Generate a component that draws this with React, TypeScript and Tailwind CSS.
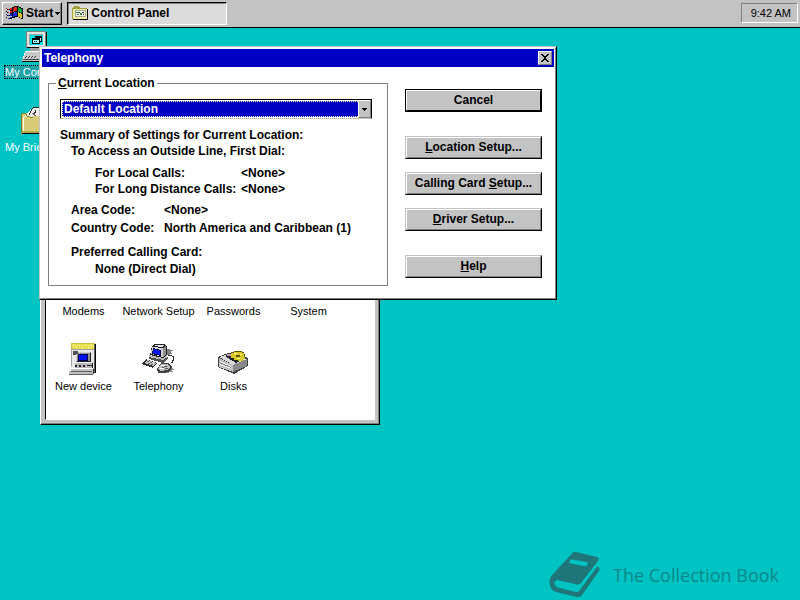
import type { ReactNode } from 'react';

const FONT = "font-['Liberation_Sans',Arial,sans-serif]";

function WindowsLogo() {
  return (
    <svg width="18" height="16" viewBox="0 0 18 16" shapeRendering="crispEdges" aria-hidden="true">
      <path d="M6 2h2v-1h5v1h2v1h2v11h-2v-1h-2v-1h-4v1h-3z" fill="#000" />
      <path d="M7 3h1v-1h3v4h-3v1h-1z" fill="#e02020" />
      <path d="M12 2h1v1h2v1h1v4h-2v-1h-2z" fill="#00a040" />
      <path d="M7 8h1v-1h3v4h-3v1h-1z" fill="#1030e0" />
      <path d="M12 7h1v1h2v1h1v4h-2v-1h-2z" fill="#e0c820" />
      <path d="M4 3h2v2h-2zM2 4h1v1h-1zM0 3h1v1h-1zM4 6h2v2h-2zM2 7h1v1h-1z" fill="#e02020" />
      <path d="M4 9h2v2h-2zM2 10h1v1h-1zM0 9h1v1h-1zM4 12h2v1h-2zM2 13h1v1h-1z" fill="#1030e0" />
      <path d="M4 5h2v1h-2zM3 4h1v1h-1zM1 4h1v1h-1zM4 8h2v1h-2zM1 7h1v1h-1zM3 10h1v1h-1zM1 10h1v1h-1zM4 13h2v1h-2zM3 13h1v1h-1zM0 6h1v1h-1zM0 12h1v1h-1z" fill="#000" />
    </svg>
  );
}

function ControlPanelIcon() {
  return (
    <svg width="18" height="16" viewBox="0 0 18 16" shapeRendering="crispEdges" aria-hidden="true">
      <path d="M1 3h1v-2h6v2h8v12h-14v-1h-1z" fill="#f0f0a8" />
      <path d="M1 3h1v-1h1v-1h5v1h1v1h7v1h-15zM1 3h1v11h-1z" fill="#a0a040" />
      <path d="M16 4h1v11h-15v-1h14z" fill="#000" />
      <path d="M4 5h11v7h-11z" fill="#a0a890" />
      <path d="M5 6h9v5h-9z" fill="#f0f0e8" />
      <path d="M5 7h3v1h-3zM6 9h2v1h-2zM9 8h2v2h-2z" fill="#308040" />
      <path d="M8 7h1v1h-1zM11 7h2v1h-2zM12 9h1v1h-1z" fill="#303030" />
    </svg>
  );
}

function ComputerIcon() {
  return (
    <svg width="32" height="32" viewBox="0 0 32 32" shapeRendering="crispEdges" aria-hidden="true">
      <path d="M9 0h19v1h1v15h-1v1h-20v-16h1z" fill="#808080" />
      <path d="M9 1h18v15h-18z" fill="#e4e4e4" />
      <path d="M28 1h1v15h-1zM9 16h20v1h-20z" fill="#000" />
      <path d="M11 3h14v11h-14z" fill="#00e0e4" />
      <path d="M11 3h14v1h-14zM11 3h1v11h-1z" fill="#a0a0a0" />
      <path d="M17 5h7v6h-7z" fill="#000" />
      <path d="M18 7h5v3h-5z" fill="#a0f8f8" />
      <path d="M14 7h8v6h-8z" fill="#000" />
      <path d="M15 9h6v3h-6z" fill="#a0f8f8" />
      <path d="M16 10h1v1h-1zM18 10h1v1h-1z" fill="#000" />
      <path d="M12 17h14v3h-14z" fill="#a0a0a0" />
      <path d="M7 20h22v4h2v7h-27v-3h1v-3h1v-3h1z" fill="#c8c8c8" />
      <path d="M7 20h22v1h-22zM6 22h1v2h-1zM5 25h1v3h-1z" fill="#f8f8f8" />
      <path d="M8 25h1v1h-1zM7 26h1v1h-1zM11 25h1v1h-1zM10 26h1v1h-1zM14 25h1v1h-1zM13 26h1v1h-1zM17 25h1v1h-1zM16 26h1v1h-1zM5 28h18v1h-18z" fill="#404040" />
      <path d="M4 30h27v1h-27zM29 21h1v9h-1z" fill="#000" />
    </svg>
  );
}

function BriefcaseIcon() {
  return (
    <svg width="32" height="32" viewBox="0 0 32 32" shapeRendering="crispEdges" aria-hidden="true">
      <path d="M9 8l5-6h9l4 5v5h-18z" fill="#f0f0f0" />
      <path d="M15 1h7v1h-7zM14 2h1v1h-1zM13 3h1v2h-1zM12 5h1v2h-1zM11 7h1v2h-1zM17 4h1v3h-1zM16 6h1v2h-1z" fill="#303020" />
      <path d="M3 8h2v-1h4v3h3v2h3v-2h13v18h-25z" fill="#d8cc78" />
      <path d="M3 8h1v19h-1zM4 7h4v1h-4zM8 8h1v2h-1zM9 10h3v1h-3zM12 11h3v1h-3z" fill="#808028" />
      <path d="M5 11h1v14h-1zM6 10h2v1h-2z" fill="#fffff0" />
      <path d="M14 7h2v1h-2zM15 8h2v1h-2zM16 9h2v1h-2z" fill="#707070" />
      <path d="M4 25h24v2h-24z" fill="#b0a850" />
      <path d="M4 27h25v1h-25zM28 10h1v18h-1z" fill="#000" />
    </svg>
  );
}

function NewDeviceIcon() {
  return (
    <svg width="32" height="32" viewBox="0 0 32 32" shapeRendering="crispEdges" aria-hidden="true">
      <path d="M3 0h24v30h-24z" fill="#e8e8e8" />
      <path d="M3 0h24v6h-24z" fill="#e8e050" />
      <path d="M3 0h24v1h-24zM3 0h1v6h-1z" fill="#c8c040" />
      <path d="M5 2h1v1h-1zM8 4h1v1h-1zM11 2h1v1h-1zM14 4h1v1h-1zM17 2h1v1h-1zM20 4h1v1h-1zM23 2h1v1h-1z" fill="#fff" />
      <path d="M3 6h24v1h-24zM3 7h1v16h-1z" fill="#a0a0a0" />
      <path d="M27 1h1v29h-1z" fill="#000" />
      <path d="M26 1h1v29h-1z" fill="#606060" />
      <path d="M5 8h5v4h-5z" fill="#505050" />
      <path d="M8 9h15v10h-15z" fill="#909090" />
      <path d="M8 9h14v1h-14zM8 9h1v9h-1z" fill="#d0d0d0" />
      <path d="M5 8h5v3h-5z" fill="#505050" />
      <path d="M10 11h10v7h-10z" fill="#000050" />
      <path d="M11 12h8v5h-8z" fill="#0010f0" />
      <path d="M22 10h1v9h-1zM9 18h14v1h-14z" fill="#202020" />
      <path d="M7 19h18v6h-18z" fill="#b8b8b8" />
      <path d="M7 19h17v1h-17z" fill="#f4f4f4" />
      <path d="M7 22h2v2h-2zM11 22h2v2h-2zM15 22h2v2h-2zM19 22h5v1h-5zM24 20h1v5h-1z" fill="#202020" />
      <path d="M3 25h23l-1 6h-24v-3h1v-2h1z" fill="#c0c0c0" />
      <path d="M3 25h22v1h-22zM2 26h1v2h-1z" fill="#fff" />
      <path d="M3 28h21v1h-21zM1 31h24v1h-24z" fill="#606060" />
      <path d="M25 26h1v5h-1z" fill="#303030" />
    </svg>
  );
}

function TelephonyIcon() {
  return (
    <svg width="34" height="32" viewBox="0 0 34 32" shapeRendering="crispEdges" aria-hidden="true">
      <path d="M24 6l8 1-4 2 2 2-7 2z" fill="#808080" />
      <path d="M10 3l3-2h9l3 2v10l-4 3-13-4z" fill="#202020" />
      <path d="M11 3l3-1h8l-2 2z" fill="#e0e0e0" />
      <path d="M10 4l11 1v9l-12-3z" fill="#d0d0d0" />
      <path d="M21 5l3-2v9l-3 2z" fill="#909090" />
      <path d="M11 5l8 2v6l-9-2z" fill="#000050" />
      <path d="M12 6l6 2v4l-7-2z" fill="#0018f0" />
      <path d="M7 12l14 3 4-3 1 3-5 4-14-4z" fill="#b8b8b8" />
      <path d="M7 14l14 3 5-3v2l-5 4-14-4z" fill="#505050" />
      <path d="M4 16l11 4-4 5-11-4z" fill="#303030" />
      <path d="M5 17l9 3-3 3-9-3z" fill="#c8c8c8" />
      <path d="M5 18h2v1h-2zM8 19h2v1h-2zM6 20h2v1h-2zM9 21h2v1h-2z" fill="#606060" />
      <path d="M26 12h4v1h2v5h-1v2h-2v-1h1v-2h1v-3h-1v-1h-4z" fill="#303030" />
      <path d="M24 24l9 2-3 1 1 2-8 1z" fill="#909090" />
      <path d="M19 20h8l3 4-2 4-5 2h-7l-1-4z" fill="#404040" />
      <path d="M19 21h7l2 3-3 3-7 1-2-2z" fill="#c0c0c0" />
      <path d="M19 22h4v1h-4zM18 25h4v1h-4z" fill="#fff" />
      <path d="M22 23h3v1h-3zM20 24h2v1h-2zM23 25h3v1h-3z" fill="#505050" />
    </svg>
  );
}

function DisksIcon() {
  return (
    <svg width="32" height="32" viewBox="0 0 32 32" shapeRendering="crispEdges" aria-hidden="true">
      <path d="M0 14l10-4h10l10 5v8l-14 8-16-7z" fill="#404040" />
      <path d="M1 14l9-3 19 5-14 6z" fill="#d8d8d8" />
      <path d="M1 15l14 7v7l-14-5z" fill="#c0c0c0" />
      <path d="M15 22l14-6v7l-14 6z" fill="#888888" />
      <path d="M2 18l11 5v1l-11-5zM2 21l11 4v1l-11-4z" fill="#f4f4f4" />
      <path d="M2 19l11 5v1l-11-5z" fill="#808080" />
      <path d="M7 13l6-3 12 7-7 3z" fill="#202020" />
      <path d="M13 10h3v-1h8v1h2v2h1v4h-2v2h-5v-1h-4v-2h-3z" fill="#d8c828" />
      <path d="M16 8h8v1h-8zM24 9h2v1h-2zM26 11h1v3h-1zM13 9h3v1h-3zM18 12h4v2h-4z" fill="#605808" />
      <path d="M16 10h3v1h-3zM22 11h2v1h-2zM19 15h3v1h-3z" fill="#fff870" />
      <path d="M9 11h4v2h-4z" fill="#c8a0b8" />
    </svg>
  );
}

function BookIcon() {
  return (
    <svg width="52" height="50" viewBox="0 0 52 50" aria-hidden="true">
      <path
        d="M24 2.500Q25 1.500 27 2L48 7Q51 8 49 11L32 33Q30.500 35 28 34.500L8 30Q5 31 5.500 34Q6 36.500 9 37.500L27 42Q29 42.500 30.500 40.500L47 18Q48 16 50 17.500Q51 19 50 21L33 45Q31 47.500 28 47L7 42Q1 40 .5 33Q0 28 4 24Z"
        fill="#1f7678"
      />
      <path d="M23.500 9.500L37 12Q39.500 12.500 38.500 14.500Q37.500 16.500 35 16L22 13.500Q19.500 13 20.500 11Q21.500 9 23.500 9.500Z" fill="#00c4c4" />
    </svg>
  );
}

function PushButton({ children, isDefault = false }: { children: ReactNode; isDefault?: boolean }) {
  return (
    <button
      className={`h-[23px] w-full border bg-[#c3c3c3] text-xs font-bold ${
        isDefault ? 'border-black' : 'border-t-[#c3c3c3] border-l-[#c3c3c3] border-r-black border-b-black'
      }`}
    >
      <span
        className={`flex h-full items-center justify-center border-t border-l border-white pb-[2px] ${
          isDefault ? 'border-r border-b border-r-black border-b-black' : 'border-r border-b border-r-[#808080] border-b-[#808080]'
        }`}
      >
        <span>{children}</span>
      </span>
    </button>
  );
}

function PanelItem({ label, icon }: { label: string; icon?: ReactNode }) {
  return (
    <a href="#" className="flex h-[75px] w-[75px] flex-col items-center">
      <span className="flex h-9 items-start">{icon}</span>
      <span className="text-[11px] leading-[14px] whitespace-nowrap">{label}</span>
    </a>
  );
}

function DesktopItem({ label, icon, selected = false }: { label: string; icon: ReactNode; selected?: boolean }) {
  return (
    <a href="#" className="flex h-[75px] flex-col items-start text-white">
      <span className="pl-[14px]">{icon}</span>
      <span
        className={`mt-[2px] border border-dotted text-[11px] leading-[12px] whitespace-nowrap ${
          selected ? 'border-black bg-[#20a4a8]' : 'border-transparent'
        }`}
      >
        {label}
      </span>
    </a>
  );
}

function Taskbar() {
  return (
    <header className="flex h-7 items-center gap-[5px] border-b border-black bg-[#c3c3c3] px-[2px] pb-px">
      <button className="flex h-[23px] items-center gap-[2px] border border-t-white border-r-black border-b-black border-l-white pr-px pl-[3px] text-xs font-bold shadow-[inset_-1px_-1px_#808080]">
        <WindowsLogo />
        Start
        <svg width="5" height="3" viewBox="0 0 5 3" shapeRendering="crispEdges" aria-hidden="true">
          <path d="M0 0h5v1h-1v1h-1v1h-1v-1h-1v-1h-1z" />
        </svg>
      </button>
      <button className="flex h-[23px] w-40 items-center gap-[2px] border border-t-black border-r-white border-b-white border-l-black bg-[#dcdcdc] pl-[3px] text-xs font-bold shadow-[inset_1px_1px_#808080]">
        <ControlPanelIcon />
        Control Panel
      </button>
      <div className="ml-auto flex h-5 w-[57px] items-center justify-end border border-t-[#808080] border-r-white border-b-white border-l-[#808080] pr-[6px] text-[11px]">
        9:42 AM
      </div>
    </header>
  );
}

function ControlPanelWindow() {
  return (
    <section className="absolute top-[220px] left-10 w-[340px] border border-t-white border-r-black border-b-black border-l-white bg-[#c3c3c3] p-1 shadow-[inset_-1px_-1px_#808080]">
      <div className="flex flex-wrap content-start border border-t-[#808080] border-r-white border-b-white border-l-black bg-white pt-[14px] pb-px">
        <PanelItem label="Modems" />
        <PanelItem label="Network Setup" />
        <PanelItem label="Passwords" />
        <PanelItem label="System" />
        <PanelItem label="New device" icon={<NewDeviceIcon />} />
        <PanelItem label="Telephony" icon={<TelephonyIcon />} />
        <PanelItem label="Disks" icon={<DisksIcon />} />
      </div>
    </section>
  );
}

function TelephonyDialog() {
  return (
    <section className="absolute top-[18px] left-[39px] w-[518px] border border-t-[#c3c3c3] border-r-black border-b-black border-l-[#c3c3c3] bg-white text-xs leading-4 font-bold">
      <div className="border border-t-white border-r-[#808080] border-b-[#808080] border-l-white p-px">
        <div className="flex h-[18px] items-center justify-between bg-[#0000c4] px-[2px] text-white">
          <h1>Telephony</h1>
          <button
            aria-label="Close"
            className="flex size-[14px] items-center justify-center border border-t-white border-r-[#808080] border-b-[#808080] border-l-white bg-[#c3c3c3]"
          >
            <svg width="8" height="8" viewBox="0 0 8 8" shapeRendering="crispEdges" aria-hidden="true">
              <path d="M0 0h2v1h1v1h2v-1h1v-1h2v1h-1v1h-1v1h-1v2h1v1h1v1h1v1h-2v-1h-1v-1h-2v1h-1v1h-2v-1h1v-1h1v-1h1v-2h-1v-1h-1v-1h-1z" />
            </svg>
          </button>
        </div>

        <div className="flex gap-[17px] pt-2 pr-3 pb-[11px] pl-[6px]">
          <fieldset className="min-w-0 flex-1 border border-[#808080] px-[11px] pb-2">
            <legend className="-ml-1 leading-4">
              <label htmlFor="location" className="px-[2px]">
                <u>C</u>urrent Location
              </label>
            </legend>

            <div className="relative mt-2 mr-1 border border-t-black border-r-black border-b-[#c3c3c3] border-l-black bg-white p-px">
              <select
                id="location"
                className="block h-4 w-full appearance-none border border-dotted border-yellow-100 bg-[#0000c4] pl-px text-xs leading-[14px] font-bold text-white outline-none"
              >
                <option>Default Location</option>
              </select>
              <span className="pointer-events-none absolute inset-y-0 right-0 flex w-[13px] items-center justify-center border border-t-white border-r-[#808080] border-b-[#808080] border-l-white bg-[#c3c3c3]">
                <svg width="5" height="3" viewBox="0 0 5 3" shapeRendering="crispEdges" aria-hidden="true">
                  <path d="M0 0h5v1h-1v1h-1v1h-1v-1h-1v-1h-1z" />
                </svg>
              </span>
            </div>

            <p className="mt-2">Summary of Settings for Current Location:</p>
            <div className="pl-[11px]">
              <p>To Access an Outside Line, First Dial:</p>
              <dl className="mt-[6px] grid grid-cols-[146px_1fr] pl-6">
                <dt>For Local Calls:</dt>
                <dd>&lt;None&gt;</dd>
                <dt className="whitespace-nowrap">For Long Distance Calls:</dt>
                <dd>&lt;None&gt;</dd>
              </dl>
              <dl className="mt-[5px] grid grid-cols-[93px_1fr] gap-y-[2px] whitespace-nowrap">
                <dt>Area Code:</dt>
                <dd>&lt;None&gt;</dd>
                <dt>Country Code:</dt>
                <dd>North America and Caribbean (1)</dd>
              </dl>
              <p className="mt-2">Preferred Calling Card:</p>
              <p className="mt-px pl-6">None (Direct Dial)</p>
            </div>
          </fieldset>

          <div className="flex w-[137px] flex-col gap-[13px] pt-[14px]">
            <PushButton isDefault>Cancel</PushButton>
            <div className="flex flex-col gap-[13px] py-[11px]">
              <PushButton>
                <u>L</u>ocation Setup...
              </PushButton>
              <PushButton>
                Calling Card <u>S</u>etup...
              </PushButton>
              <PushButton>
                <u>D</u>river Setup...
              </PushButton>
            </div>
            <PushButton>
              <u>H</u>elp
            </PushButton>
          </div>
        </div>
      </div>
    </section>
  );
}

export default function App() {
  return (
    <div className={`flex min-h-screen flex-col bg-[#00c4c4] text-black ${FONT}`}>
      <Taskbar />
      <main className="relative flex-1 overflow-hidden">
        <nav className="flex flex-col pt-[3px] pl-1">
          <DesktopItem label="My Computer" icon={<ComputerIcon />} selected />
          <DesktopItem label="My Briefcase" icon={<BriefcaseIcon />} />
        </nav>
        <ControlPanelWindow />
        <TelephonyDialog />
        <div className="absolute right-[21px] bottom-0 flex items-center gap-3 font-['Open_Sans','Noto_Sans',sans-serif] text-lg text-[#0b888b]">
          <BookIcon />
          The Collection Book
        </div>
      </main>
    </div>
  );
}
